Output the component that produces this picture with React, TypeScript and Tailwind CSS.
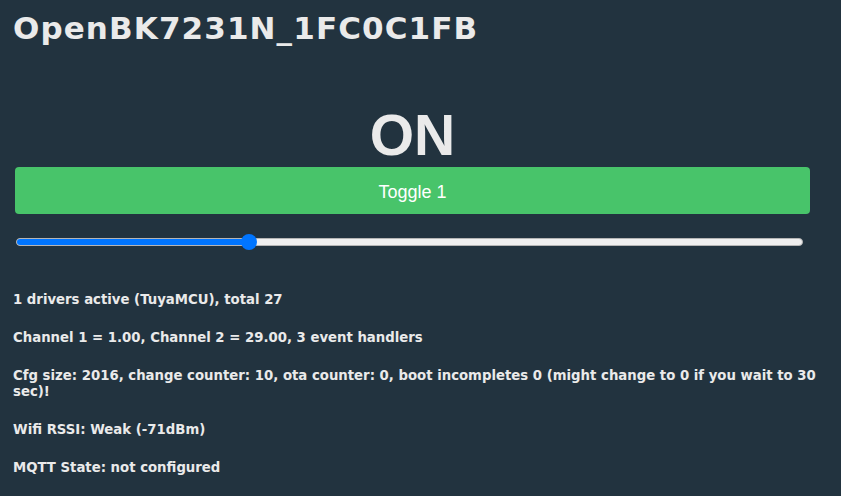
import React from "react";

const lines: string[] = [
  "1 drivers active (TuyaMCU), total 27",
  "Channel 1 = 1.00, Channel 2 = 29.00, 3 event handlers",
  "Cfg size: 2016, change counter: 10, ota counter: 0, boot incompletes 0 (might change to 0 if you wait to 30 sec)!",
  "Wifi RSSI: Weak (-71dBm)",
  "MQTT State: not configured",
];

export default function App() {
  const value = 29.6;
  return (
    <div className="w-[841px] h-[496px] overflow-hidden bg-[#22333f] text-[#eaeaea] font-['DejaVu_Sans',Verdana,sans-serif]">
      <h1 className="pl-[13px] pt-[10px] text-[31px] leading-[37px] font-bold tracking-[1.1px]">
        OpenBK7231N_1FC0C1FB
      </h1>
      <div className="ml-[15px] w-[795px] mt-[56px]">
        <div className="text-center text-[57px] leading-[64px] font-bold font-['Liberation_Sans',Arial,sans-serif]">
          ON
        </div>
        <div className="h-[47px] rounded-[4px] bg-[#48c46a] flex items-center justify-center pt-[4px] text-[18px] text-white font-['Liberation_Sans',Arial,sans-serif]">
          Toggle 1
        </div>
        <div className="relative mt-[20px] h-[16px] w-[787px] ml-[1px] flex items-center">
          <div className="h-[8px] w-full rounded-full bg-[#efefef] border border-[#b5b5b5] overflow-hidden">
            <div className="h-full bg-[#0075ff]" style={{ width: `${value}%` }} />
          </div>
          <div
            className="absolute top-0 w-[16px] h-[16px] rounded-full bg-[#0075ff] -translate-x-1/2"
            style={{ left: `${value}%` }}
          />
        </div>
      </div>
      <div className="pl-[13px] pr-[13px] mt-[42px] flex flex-col gap-[22px] text-[13.28px] leading-[16px] font-bold">
        {lines.map((l) => (
          <h5 key={l}>{l}</h5>
        ))}
      </div>
    </div>
  );
}
